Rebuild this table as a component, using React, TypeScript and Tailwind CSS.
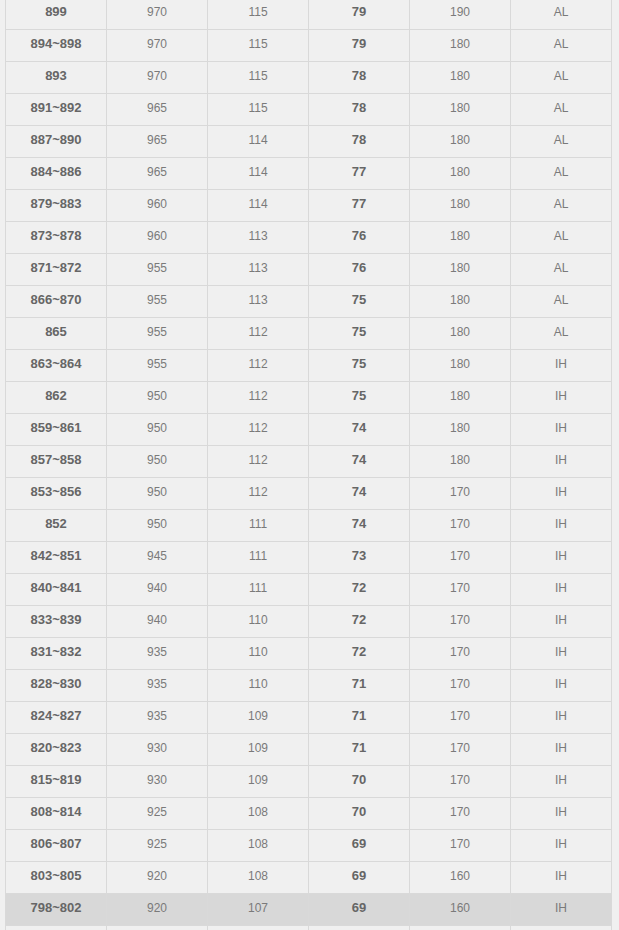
const rows: string[][] = [
  ["899", "970", "115", "79", "190", "AL"],
  ["894~898", "970", "115", "79", "180", "AL"],
  ["893", "970", "115", "78", "180", "AL"],
  ["891~892", "965", "115", "78", "180", "AL"],
  ["887~890", "965", "114", "78", "180", "AL"],
  ["884~886", "965", "114", "77", "180", "AL"],
  ["879~883", "960", "114", "77", "180", "AL"],
  ["873~878", "960", "113", "76", "180", "AL"],
  ["871~872", "955", "113", "76", "180", "AL"],
  ["866~870", "955", "113", "75", "180", "AL"],
  ["865", "955", "112", "75", "180", "AL"],
  ["863~864", "955", "112", "75", "180", "IH"],
  ["862", "950", "112", "75", "180", "IH"],
  ["859~861", "950", "112", "74", "180", "IH"],
  ["857~858", "950", "112", "74", "180", "IH"],
  ["853~856", "950", "112", "74", "170", "IH"],
  ["852", "950", "111", "74", "170", "IH"],
  ["842~851", "945", "111", "73", "170", "IH"],
  ["840~841", "940", "111", "72", "170", "IH"],
  ["833~839", "940", "110", "72", "170", "IH"],
  ["831~832", "935", "110", "72", "170", "IH"],
  ["828~830", "935", "110", "71", "170", "IH"],
  ["824~827", "935", "109", "71", "170", "IH"],
  ["820~823", "930", "109", "71", "170", "IH"],
  ["815~819", "930", "109", "70", "170", "IH"],
  ["808~814", "925", "108", "70", "170", "IH"],
  ["806~807", "925", "108", "69", "170", "IH"],
  ["803~805", "920", "108", "69", "160", "IH"],
  ["798~802", "920", "107", "69", "160", "IH"],
  // next row is just off the bottom of the frame
  ["", "", "", "", "", ""],
];

const HIGHLIGHT = "798~802";

export default function App() {
  return (
    <div className="h-[930px] overflow-hidden bg-[#f0f0f0] px-[5px] font-['Liberation_Sans',Arial,sans-serif]">
      <table className="-mt-[3px] w-[607px] table-fixed border-collapse">
        <tbody>
          {rows.map((r, ri) => {
            const hl = r[0] === HIGHLIGHT;
            return (
              <tr key={ri} className={hl ? "bg-[#d8d8d8]" : "bg-[#f0f0f0]"}>
                {r.map((c, i) => {
                  const bold = i === 0 || i === 3;
                  return (
                    <td
                      key={i}
                      className={
                        "h-[32px] border border-[#d9d9d9] p-0 pb-[3px] text-center align-middle leading-[14px] " +
                        (bold
                          ? "text-[13px] font-bold text-[#666666]"
                          : "text-[12px] text-[#7a7a7a]")
                      }
                    >
                      {c}
                    </td>
                  );
                })}
              </tr>
            );
          })}
        </tbody>
      </table>
    </div>
  );
}
